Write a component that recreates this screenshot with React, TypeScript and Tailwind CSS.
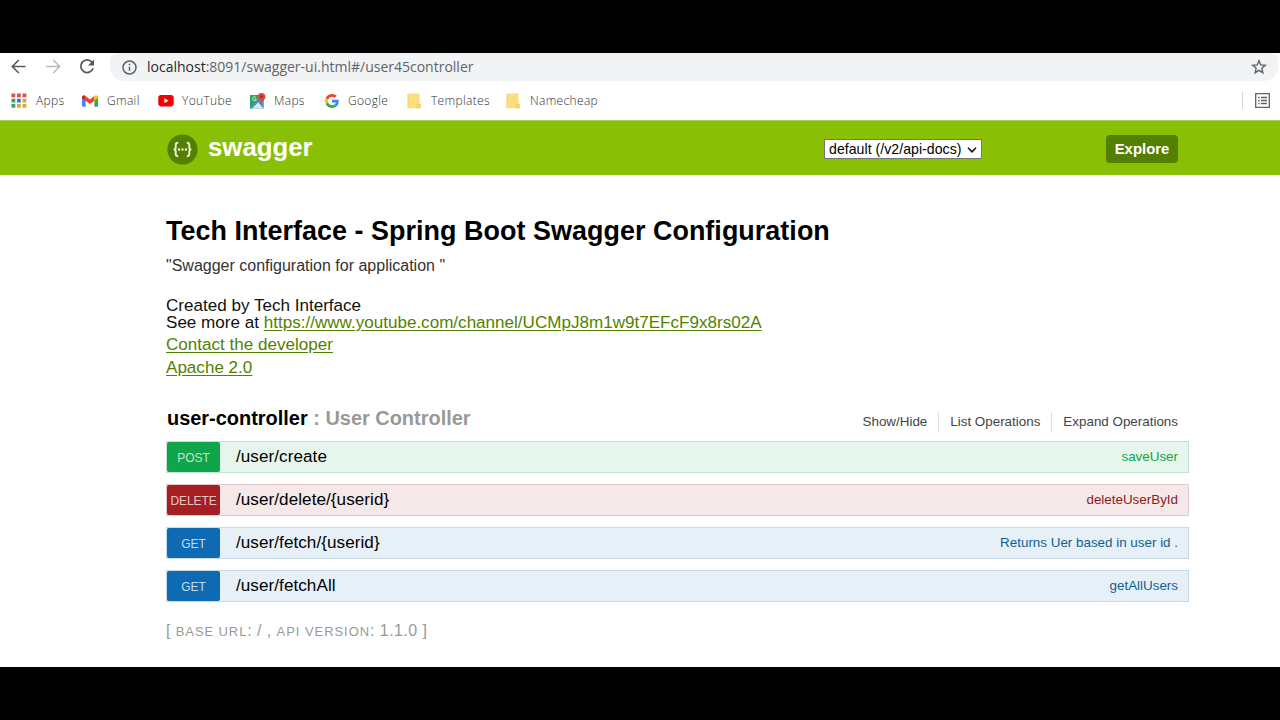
import type { ReactNode } from "react";

const BOOKMARKS = [
  { label: "Apps", icon: <AppsIcon />, width: "w-[71px]", gap: "gap-[9px]" },
  { label: "Gmail", icon: <GmailIcon />, width: "w-[76px]", gap: "gap-[9px]" },
  { label: "YouTube", icon: <YouTubeIcon />, width: "w-[91px]", gap: "gap-[8px]" },
  { label: "Maps", icon: <MapsIcon />, width: "w-[75px]", gap: "gap-[8px]" },
  { label: "Google", icon: <GoogleIcon />, width: "w-[83px]", gap: "gap-[9px]" },
  { label: "Templates", icon: <FolderIcon />, width: "w-[99px]", gap: "gap-[10px]" },
  { label: "Namecheap", icon: <FolderIcon />, width: "w-[110px]", gap: "gap-[10px]" },
];

const OPERATIONS = [
  { method: "POST", path: "/user/create", summary: "saveUser", row: "bg-[#e7f6ec] border-[#c5dfd0]", badge: "bg-[#10a54a]", text: "text-[#10a54a]" },
  { method: "DELETE", path: "/user/delete/{userid}", summary: "deleteUserById", row: "bg-[#f5e8e8] border-[#e2c8ca]", badge: "bg-[#a41e22]", text: "text-[#8c1a20]" },
  { method: "GET", path: "/user/fetch/{userid}", summary: "Returns Uer based in user id .", row: "bg-[#e7f0f7] border-[#c6d9e4]", badge: "bg-[#0f6ab4]", text: "text-[#0f5f94]" },
  { method: "GET", path: "/user/fetchAll", summary: "getAllUsers", row: "bg-[#e7f0f7] border-[#c6d9e4]", badge: "bg-[#0f6ab4]", text: "text-[#0f5f94]" },
];

function AppsIcon() {
  const colors = ["#d9534a", "#d9534a", "#d9534a", "#4a9a68", "#3f78c8", "#d8a63c", "#4a9a68", "#d8a63c", "#d8a63c"];
  return (
    <svg className="h-4 w-4" viewBox="0 0 16 16">
      {colors.map((c, i) => (
        <rect key={i} x={0.5 + (i % 3) * 5.5} y={0.5 + Math.floor(i / 3) * 5.2} width="3.8" height="3.8" fill={c} />
      ))}
    </svg>
  );
}

function GmailIcon() {
  return (
    <svg className="h-4 w-4" viewBox="0 0 16 16">
      <path d="M0 4.5v8.2c0 .6.5 1 1 1h2.6V7z" fill="#4285f4" />
      <path d="M16 4.5v8.2c0 .6-.5 1-1 1h-2.6V7z" fill="#34a853" />
      <path d="M3.6 3.1v4.6L8 11l4.4-3.3V3.1L8 6.5z" fill="#ea4335" />
      <path d="M0 4v1.1l3.6 2.7V3.2l-.9-.7C1.6 1.7 0 2.5 0 4z" fill="#c5221f" />
      <path d="M16 4v1.1l-3.6 2.7V3.2l.9-.7C14.4 1.7 16 2.5 16 4z" fill="#fbbc04" />
    </svg>
  );
}

function YouTubeIcon() {
  return (
    <svg className="h-4 w-4" viewBox="0 0 16 16">
      <rect x="0.3" y="2" width="15.4" height="11.4" rx="2.8" fill="#f40000" />
      <path d="M6.4 5.3v4.8l4.2-2.4z" fill="#fff" />
    </svg>
  );
}

function MapsIcon() {
  return (
    <svg className="h-4 w-[17px]" viewBox="0 0 17 16">
      <path d="M1 2h13.5v13.5H1z" fill="#2fa362" />
      <path d="M2.5 15.5 9 9l5.5 6.5z" fill="#dfe5ea" />
      <path d="m9.3 8.8 5.2-3.5v10z" fill="#4d8df0" />
      <path d="m1 14.5 9.5-9.5 1.5 1.5-9 9H1z" fill="#4d8df0" />
      <path d="M6.8 4.4a1.9 1.9 0 1 0 .5 1.6H5.7" fill="none" stroke="#d5efdf" strokeWidth="0.9" />
      <path d="M12.5 0a3.9 3.9 0 0 0-3.9 3.9c0 2.5 3.2 3.8 3.9 7.1.7-3.3 3.9-4.6 3.9-7.1A3.9 3.9 0 0 0 12.5 0z" fill="#dd4b3e" />
      <circle cx="12.5" cy="3.8" r="1.3" fill="#8c2a22" />
    </svg>
  );
}

function GoogleIcon() {
  return (
    <svg className="ml-px h-[14px] w-[14px]" viewBox="0 0 48 48">
      <path fill="#EA4335" d="M24 9.5c3.54 0 6.71 1.22 9.21 3.6l6.85-6.85C35.9 2.38 30.47 0 24 0 14.62 0 6.51 5.38 2.56 13.22l7.98 6.19C12.43 13.72 17.74 9.5 24 9.5z" />
      <path fill="#4285F4" d="M46.98 24.55c0-1.57-.15-3.09-.38-4.55H24v9.02h12.94c-.58 2.96-2.26 5.48-4.78 7.18l7.73 6c4.51-4.18 7.09-10.36 7.09-17.65z" />
      <path fill="#FBBC05" d="M10.53 28.59c-.48-1.45-.76-2.99-.76-4.59s.27-3.14.76-4.59l-7.98-6.19C.92 16.46 0 20.12 0 24c0 3.88.92 7.54 2.56 10.78l7.97-6.19z" />
      <path fill="#34A853" d="M24 48c6.48 0 11.93-2.13 15.89-5.81l-7.73-6c-2.15 1.45-4.92 2.3-8.16 2.3-6.26 0-11.57-4.22-13.47-9.91l-7.98 6.19C6.51 42.62 14.62 48 24 48z" />
    </svg>
  );
}

function FolderIcon() {
  return (
    <svg className="h-4 w-[14px]" viewBox="0 0 14 16">
      <path d="M1 .5h11.5v10.3h1v4.5H1z" fill="#fbdf7e" />
      <path d="M.5 1v14.3h1V1z" fill="#f2cf62" />
      <path d="M9.8 15.3v-3.5l1.2-1h2.5v4.5z" fill="#f0ca58" />
      <path d="M10.9 12h1.5v2.3h-1.5z" fill="#fbe596" />
    </svg>
  );
}

function BrowserBar() {
  return (
    <div className="flex h-7 items-center bg-white">
      <div className="flex w-[110px] shrink-0 items-center pl-[11px]">
        <svg className="h-4 w-4" viewBox="0 0 16 16" fill="none" stroke="#55585c" strokeWidth="1.6">
          <path d="M14.5 7.5H1.5M7.8 1 1.3 7.5l6.5 6.5" />
        </svg>
        <svg className="ml-[18px] h-4 w-4" viewBox="0 0 16 16" fill="none" stroke="#b9bbbe" strokeWidth="1.5">
          <path d="M1 7.5h13.5M8.2 1l6.5 6.5L8.2 14" />
        </svg>
        <svg className="ml-[18px] h-4 w-4" viewBox="0 0 16 16">
          <path d="M13 3.2A6.3 6.3 0 1 0 14.1 9.3" fill="none" stroke="#55585c" strokeWidth="1.8" />
          <path d="M15 .5v6H9z" fill="#55585c" />
        </svg>
      </div>
      <div className="flex h-7 w-[1168px] items-center rounded-b-[14px] rounded-t-[8px] bg-[#f1f3f4] pl-3 pr-[11px]">
        <svg className="h-[15px] w-[15px]" viewBox="0 0 15 15" fill="none" stroke="#5f6368" strokeWidth="1.5">
          <circle cx="7.5" cy="7.5" r="6.5" />
          <path d="M7.5 6.8v4M7.5 3.8v1.5" />
        </svg>
        <span className="mb-px ml-[10px] whitespace-nowrap font-['Open_Sans',sans-serif] text-[14px] text-[#5f6368]">
          <span className="text-[#26282b]">localhost</span>:8091/swagger-ui.html#/user45controller
        </span>
        <svg className="ml-auto h-4 w-4" viewBox="0 0 16 16" fill="none" stroke="#5f6368" strokeWidth="1.4">
          <path d="m8 1.8 1.75 4.15 4.5.4-3.4 2.95 1.02 4.4L8 11.35 4.13 13.7l1.02-4.4-3.4-2.95 4.5-.4z" />
        </svg>
      </div>
    </div>
  );
}

function BookmarksBar() {
  return (
    <div className="flex h-[39px] items-center bg-white pl-[11px]">
      {BOOKMARKS.map((b) => (
        <div key={b.label} className={`flex shrink-0 items-center ${b.width} ${b.gap}`}>
          {b.icon}
          <span className="whitespace-nowrap font-['Open_Sans',sans-serif] text-[12px] font-light tracking-[0.33px] text-[#2c3033]">{b.label}</span>
        </div>
      ))}
      <div className="ml-auto flex items-center gap-3 pr-[10px]">
        <div className="h-[17px] w-px bg-[#d4d6d9]" />
        <svg className="h-[15px] w-[15px]" viewBox="0 0 15 15" fill="none" stroke="#5f6368" strokeWidth="1.3">
          <path d="M.7.7h13.6v13.6H.7zM3.2 4.5h1.5M3.2 7.5h1.5M3.2 10.5h1.5M6 4.5h6M6 7.5h6M6 10.5h6" />
        </svg>
      </div>
    </div>
  );
}

function SwaggerHeader() {
  return (
    <header className="flex h-[55px] items-center border-t border-[#a9cf50] bg-[#89bf04] pl-[167px]">
      <svg className="mt-[2px] h-[31px] w-[31px]" viewBox="0 0 31 31">
        <circle cx="15.5" cy="15.5" r="15.1" fill="#547f00" />
        <g fill="none" stroke="#e9f4d0" strokeWidth="1.9">
          <path d="M11.2 8.8c-2 0-2.5.7-2.5 2.2v2.5c0 1.3-.6 2-2 2 1.4 0 2 .7 2 2V20c0 1.5.5 2.2 2.5 2.2" />
          <path d="M19.8 8.8c2 0 2.5.7 2.5 2.2v2.5c0 1.3.6 2 2 2-1.4 0-2 .7-2 2V20c0 1.5-.5 2.2-2.5 2.2" />
        </g>
        <g fill="#e9f4d0">
          <circle cx="12" cy="15.5" r="1.2" />
          <circle cx="15.5" cy="15.5" r="1.2" />
          <circle cx="19" cy="15.5" r="1.2" />
        </g>
      </svg>
      <span className="mb-[2px] ml-[10px] w-[616px] text-[25.8px] font-bold leading-8 text-white">swagger</span>
      <div className="mt-[2px] flex h-5 w-[158px] items-center border border-[#767676] bg-white pl-1 text-[14.1px] text-black">
        <span className="whitespace-nowrap pt-[2px] tracking-[0.04px]">default (/v2/api-docs)</span>
        <svg className="ml-[5px] mt-px h-[6px] w-[10px]" viewBox="0 0 10 6" fill="none" stroke="#111" strokeWidth="1.6">
          <path d="m1 .8 4 4 4-4" />
        </svg>
      </div>
      <button className="ml-[124px] mt-[2px] h-7 w-[72px] rounded bg-[#547f00] text-[14.9px] font-bold text-white">Explore</button>
    </header>
  );
}

function DocLink({ children }: { children: ReactNode }) {
  return <a className="text-[#547f00] underline underline-offset-2">{children}</a>;
}

function ApiInfo() {
  return (
    <section className="whitespace-nowrap text-[17.07px] text-black">
      <h1 className="text-[26.9px] font-bold leading-8 tracking-[0.05px]">Tech Interface - Spring Boot Swagger Configuration</h1>
      <p className="mt-[9px] text-[16px] leading-5 text-[#333]">&quot;Swagger configuration for application &quot;</p>
      <p className="mt-[21px] leading-[17px] text-[#111]">Created by Tech Interface</p>
      <p className="leading-[17px] text-[#111]">
        See more at <DocLink>https://www.youtube.com/channel/UCMpJ8m1w9t7EFcF9x8rs02A</DocLink>
      </p>
      <p className="mt-[2px] leading-[23px]"><DocLink>Contact the developer</DocLink></p>
      <p className="leading-[23px]"><DocLink>Apache 2.0</DocLink></p>
    </section>
  );
}

export default function App() {
  return (
    <div className="h-[720px] w-[1280px] overflow-hidden bg-black pt-[53px] font-['Liberation_Sans',Arial,sans-serif]">
      <BrowserBar />
      <BookmarksBar />
      <SwaggerHeader />
      <main className="h-[492px] bg-white pl-[166px] pr-[91px] pt-10">
        <ApiInfo />

        <div className="mt-[27px] flex h-6 items-center justify-between">
          <h2 className="whitespace-nowrap pl-px text-[19.95px] font-bold leading-6 text-[#999]">
            <span className="text-black">user-controller</span> : User Controller
          </h2>
          <ul className="mt-[8px] flex items-center pr-[11px] text-[13.4px] leading-5 text-[#444]">
            <li className="border-r border-[#ddd] pr-[11px]">Show/Hide</li>
            <li className="border-r border-[#ddd] px-[11px]">List Operations</li>
            <li className="pl-[11px]">Expand Operations</li>
          </ul>
        </div>

        <ul className="mt-[11px] flex flex-col gap-[11px]">
          {OPERATIONS.map((op) => (
            <li key={op.path} className={`flex h-8 items-center border pr-[10px] ${op.row}`}>
              <span className={`flex h-[30px] w-[53px] items-center justify-center rounded-[2px] pt-[2px] text-[12px] tracking-[-0.1px] text-white/75 ${op.badge}`}>{op.method}</span>
              <span className="ml-4 text-[17.07px] leading-5 tracking-[0.07px] text-black">{op.path}</span>
              <span className={`ml-auto pt-px text-[13.4px] ${op.text}`}>{op.summary}</span>
            </li>
          ))}
        </ul>

        <p className="mt-[19px] whitespace-nowrap text-[16px] leading-5 tracking-[0.43px] text-[#999]">
          [ <span className="text-[13px] tracking-[0.9px]">BASE URL</span>: / , <span className="text-[13px] tracking-[0.95px]">API VERSION</span>: 1.1.0 ]
        </p>
      </main>
    </div>
  );
}
